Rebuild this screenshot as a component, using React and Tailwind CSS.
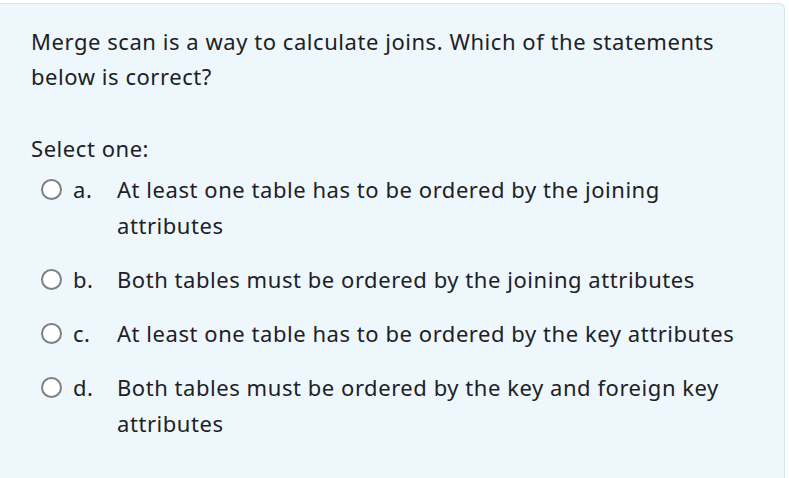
import React from "react";

const options = [
  { l: "a.", t: ["At least one table has to be ordered by the joining", "attributes"] },
  { l: "b.", t: ["Both tables must be ordered by the joining attributes"] },
  { l: "c.", t: ["At least one table has to be ordered by the key attributes"] },
  { l: "d.", t: ["Both tables must be ordered by the key and foreign key", "attributes"] },
];

export default function App() {
  return (
    <div className="w-[789px] h-[478px] overflow-hidden bg-white pt-[3px]" style={{ fontFamily: '"Noto Sans", sans-serif' }}>
      <div className="w-[785px] h-[490px] bg-[#eef7fb] border-t border-r border-[#cfe7f0] rounded-tr-[6px] pl-[31px] pt-[20px] text-[#1d2125] text-[22px] tracking-[0.55px] leading-[35px]">
        <div className="w-[725px]">Merge scan is a way to calculate joins. Which of the statements below is correct?</div>
        <div className="mt-[37px]">Select one:</div>
        <div className="mt-[5px] flex flex-col gap-[18px]">
          {options.map((o) => (
            <div key={o.l} className="flex items-start">
              <div className="w-[42px] h-[36px] flex items-center pl-[10px]">
                <span className="w-[21px] h-[21px] rounded-full border-2 border-[#7d7f82] bg-white block" />
              </div>
              <div className="w-[44px] leading-[36px]">{o.l}</div>
              <div className="leading-[36px]">
                {o.t.map((x, i) => (
                  <div key={i}>{x}</div>
                ))}
              </div>
            </div>
          ))}
        </div>
      </div>
    </div>
  );
}
